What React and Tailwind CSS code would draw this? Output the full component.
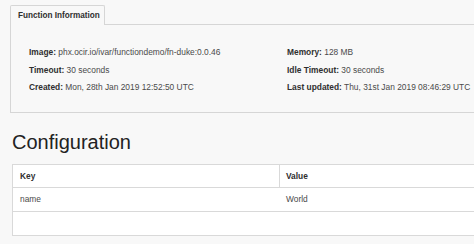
export default function App() {
  const left = [
    ["Image:", "phx.ocir.io/ivar/functiondemo/fn-duke:0.0.46"],
    ["Timeout:", "30 seconds"],
    ["Created:", "Mon, 28th Jan 2019 12:52:50 UTC"],
  ];
  const right = [
    ["Memory:", "128 MB"],
    ["Idle Timeout:", "30 seconds"],
    ["Last updated:", "Thu, 31st Jan 2019 08:46:29 UTC"],
  ];

  const Row = ({ label, value }) => (
    <div className="h-[17.5px] leading-[17.5px] whitespace-nowrap">
      <span className="font-bold text-[#2f2f2f]">{label}</span>{" "}
      <span className="text-[#4a4a4a]">{value}</span>
    </div>
  );

  return (
    <div
      className="w-[474px] h-[244px] overflow-hidden bg-[#f8f8f8] text-[8.4px]"
      style={{ fontFamily: '"Liberation Sans", Arial, sans-serif' }}
    >
      <div className="w-[490px] pl-[10px] pt-[5px]">
        {/* tabs */}
        <div className="flex">
          <div className="w-[95px] h-[20px] border border-b-0 border-[#d6d6d6] rounded-t-[2px] bg-[#f8f8f8] pl-[7px] leading-[19px] text-[8.2px] font-bold text-[#2f2f2f]">
            Function Information
          </div>
          <div className="flex-1 border-b border-[#d6d6d6]" />
        </div>

        {/* panel */}
        <div className="h-[88px] border-l border-b border-[#d6d6d6] pt-[19px] pl-[18px] flex">
          <div className="w-[258px]">
            {left.map(([l, v]) => (
              <Row key={l} label={l} value={v} />
            ))}
          </div>
          <div>
            {right.map(([l, v]) => (
              <Row key={l} label={l} value={v} />
            ))}
          </div>
        </div>
      </div>

      <div className="pl-[12px]">
        <h2 className="mt-[18px] text-[20px] leading-[23px] text-[#222]">Configuration</h2>

        <div className="mt-[10px] w-[480px] bg-white border-t border-l border-[#d9d9d9] text-[8.4px]">
          <div className="flex h-[23px] border-b border-[#d9d9d9] font-bold text-[#2f2f2f]">
            <div className="w-[267px] pl-[7px] leading-[22px] border-r border-[#d9d9d9]">Key</div>
            <div className="pl-[6px] leading-[22px]">Value</div>
          </div>
          <div className="flex h-[24px] border-b border-[#d9d9d9] text-[#4a4a4a]">
            <div className="w-[267px] pl-[7px] leading-[23px]">name</div>
            <div className="pl-[6px] leading-[23px]">World</div>
          </div>
          <div className="h-[24px] border-b border-[#d9d9d9]" />
        </div>
      </div>
    </div>
  );
}
